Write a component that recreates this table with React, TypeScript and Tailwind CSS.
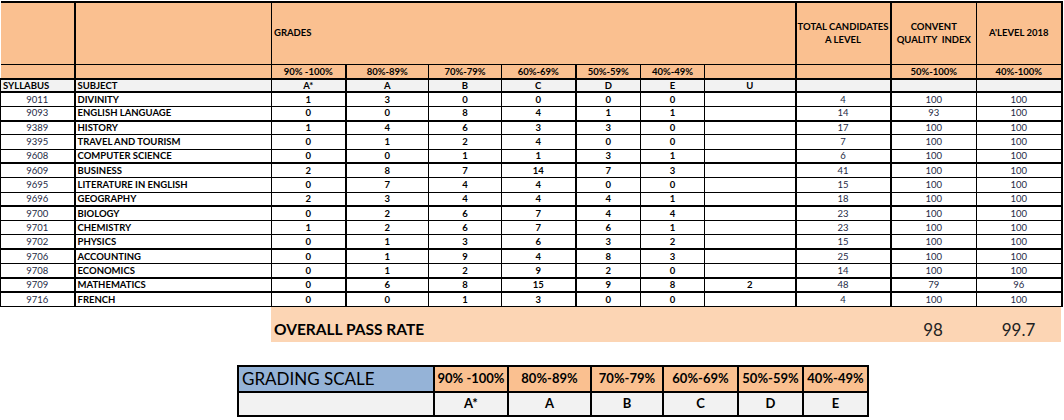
import React from 'react'

type Row = [string, string, string, string, string, string, string, string, string, string, string, string]

const rows: Row[] = [
  ['9011', 'DIVINITY', '1', '3', '0', '0', '0', '0', '', '4', '100', '100'],
  ['9093', 'ENGLISH LANGUAGE', '0', '0', '8', '4', '1', '1', '', '14', '93', '100'],
  ['9389', 'HISTORY', '1', '4', '6', '3', '3', '0', '', '17', '100', '100'],
  ['9395', 'TRAVEL AND TOURISM', '0', '1', '2', '4', '0', '0', '', '7', '100', '100'],
  ['9608', 'COMPUTER SCIENCE', '0', '0', '1', '1', '3', '1', '', '6', '100', '100'],
  ['9609', 'BUSINESS', '2', '8', '7', '14', '7', '3', '', '41', '100', '100'],
  ['9695', 'LITERATURE IN ENGLISH', '0', '7', '4', '4', '0', '0', '', '15', '100', '100'],
  ['9696', 'GEOGRAPHY', '2', '3', '4', '4', '4', '1', '', '18', '100', '100'],
  ['9700', 'BIOLOGY', '0', '2', '6', '7', '4', '4', '', '23', '100', '100'],
  ['9701', 'CHEMISTRY', '1', '2', '6', '7', '6', '1', '', '23', '100', '100'],
  ['9702', 'PHYSICS', '0', '1', '3', '6', '3', '2', '', '15', '100', '100'],
  ['9706', 'ACCOUNTING', '0', '1', '9', '4', '8', '3', '', '25', '100', '100'],
  ['9708', 'ECONOMICS', '0', '1', '2', '9', '2', '0', '', '14', '100', '100'],
  ['9709', 'MATHEMATICS', '0', '6', '8', '15', '9', '8', '2', '48', '79', '96'],
  ['9716', 'FRENCH', '0', '0', '1', '3', '0', '0', '', '4', '100', '100'],
]

// rows followed by a heavy rule
const thickAfter = [1, 4, 7, 10, 12, 13]
// columns with a heavy rule on their left side
const thickLeft = [1, 3, 6, 9, 10]

const widths = ['w-[74px]', 'w-[197px]', 'w-[74px]', 'w-[83px]', 'w-[73px]', 'w-[74px]', 'w-[65px]', 'w-[64px]', 'w-[91px]', 'w-[95px]', 'w-[86px]', 'w-[85px]']

const ranges = ['90% -100%', '80%-89%', '70%-79%', '60%-69%', '50%-59%', '40%-49%', '', '', '50%-100%', '40%-100%']
const letters = ['A*', 'A', 'B', 'C', 'D', 'E', 'U', '', '', '']

function side(i: number) {
  let c = thickLeft.includes(i) ? 'border-l-2' : 'border-l'
  if (i === 11) c += ' border-r-2'
  return c
}

export default function App() {
  return (
    <div className="w-[1064px] h-[420px] bg-white font-['Lato',sans-serif] text-black overflow-hidden">
      <table className="table-fixed border-collapse mt-[1px] w-[1061px]">
        <colgroup>
          {widths.map((w, i) => (
            <col key={i} className={w} />
          ))}
        </colgroup>
        <tbody>
          <tr className="h-[62px] bg-[#fac090] text-[9.5px] font-bold">
            <td className="border-t-2 border-black"></td>
            <td className="border-t-2 border-l-2 border-black"></td>
            <td colSpan={7} className="border-t-2 border-l border-black pl-[2px] align-middle">GRADES</td>
            <td className="border-t-2 border-l-2 border-black text-center leading-[13px] whitespace-nowrap">
              TOTAL CANDIDATES<br />A LEVEL
            </td>
            <td className="border-t-2 border-l-2 border-black text-center leading-[13px]">
              CONVENT<br />QUALITY&nbsp; INDEX
            </td>
            <td className="border-t-2 border-l border-r-2 border-black text-center">A'LEVEL 2018</td>
          </tr>
          <tr className="h-[15px] bg-[#fac090] text-[9.5px] font-bold">
            <td className="border-t border-black"></td>
            <td className="border-t border-l-2 border-black"></td>
            {ranges.map((r, i) => (
              <td key={i} className={`${side(i + 2)} border-t border-black text-center leading-none`}>
                {r}
              </td>
            ))}
          </tr>
          <tr className="h-[13px] bg-[#f2f2f2] text-[9.5px] font-bold">
            <td className="border-t-2 border-l border-black pl-[2px] leading-none">SYLLABUS</td>
            <td className="border-t-2 border-l-2 border-black pl-[2px] leading-none">SUBJECT</td>
            {letters.map((l, i) => (
              <td key={i} className={`${side(i + 2)} border-t-2 border-black text-center leading-none`}>
                {l}
              </td>
            ))}
          </tr>
          {rows.map((r, ri) => (
            <tr
              key={r[0]}
              className={`h-[14.3px] text-[9.5px] ${ri === 0 ? 'border-t-2' : thickAfter.includes(ri - 1) ? 'border-t-2' : 'border-t'} ${ri === rows.length - 1 ? 'border-b' : ''} border-black`}
            >
              {r.map((v, ci) => {
                let cls = `${ci === 0 ? 'border-l' : side(ci)} border-black leading-none p-0`
                if (ci === 0) cls += ' text-center text-[#1e2a45]'
                else if (ci === 1) cls += ' font-bold pl-[2px]'
                else if (ci < 9) cls += ' font-bold text-center'
                else cls += ' text-center text-[#1e2a45]'
                return (
                  <td key={ci} className={cls}>
                    {v}
                  </td>
                )
              })}
            </tr>
          ))}
        </tbody>
      </table>

      <div className="ml-[271px] w-[790px] h-[35px] bg-[#fcd5b4] flex items-center">
        <div className="w-[619px] pl-[3px] pt-[10px] text-[15.5px] font-bold">OVERALL PASS RATE</div>
        <div className="w-[86px] pt-[10px] text-center text-[17px] text-[#222]">98</div>
        <div className="w-[85px] pt-[10px] text-center text-[17px] text-[#222]">99.7</div>
      </div>

      <table className="table-fixed border-collapse ml-[237px] mt-[23px] border-2 border-black">
        <colgroup>
          <col className="w-[196px]" />
          <col className="w-[74px]" />
          <col className="w-[83px]" />
          <col className="w-[72px]" />
          <col className="w-[75px]" />
          <col className="w-[65px]" />
          <col className="w-[65px]" />
        </colgroup>
        <tbody>
          <tr className="h-[26px]">
            <td className="bg-[#95b3d7] border-2 border-black pl-[3px] text-[17px] leading-none">GRADING SCALE</td>
            {['90% -100%', '80%-89%', '70%-79%', '60%-69%', '50%-59%', '40%-49%'].map((g) => (
              <td key={g} className="bg-[#fac090] border-2 border-black text-center text-[13px] font-bold leading-none whitespace-nowrap">
                {g}
              </td>
            ))}
          </tr>
          <tr className="h-[24px] bg-[#f2f2f2]">
            <td className="border-2 border-black"></td>
            {['A*', 'A', 'B', 'C', 'D', 'E'].map((g) => (
              <td key={g} className="border-2 border-black text-center text-[13px] font-bold leading-none">
                {g}
              </td>
            ))}
          </tr>
        </tbody>
      </table>
    </div>
  )
}
